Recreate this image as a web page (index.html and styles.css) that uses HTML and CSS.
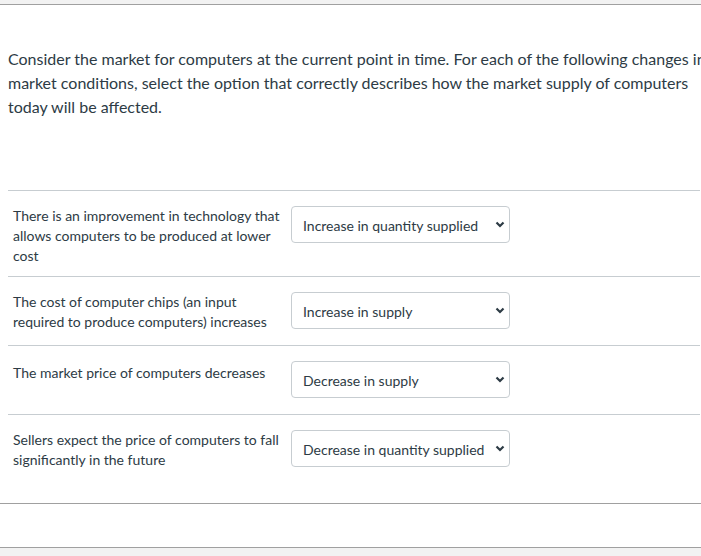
FILE: index.html
```html
<!DOCTYPE html>
<html lang="en">
<head>
    <meta charset="UTF-8">
    <meta name="viewport" content="width=device-width, initial-scale=1.0">
    <title>Market Supply of Computers</title>
    <link rel="stylesheet" href="styles.css">
</head>
<body>
    <div class="frame">
        <div class="question">
            <div class="question-text">
                <p class="intro">Consider the market for computers at the current point in time. For each of the following changes in market conditions, select the option that correctly describes how the market supply of computers today will be affected.</p>
            </div>

            <div class="answers">
                <div class="answer-row">
                    <div class="answer-label">There is an improvement in technology that allows computers to be produced at lower cost</div>
                    <div class="select-wrap">
                        <select class="answer-select">
                            <option selected>Increase in quantity supplied</option>
                            <option>Decrease in quantity supplied</option>
                            <option>Increase in supply</option>
                            <option>Decrease in supply</option>
                        </select>
                        <svg class="chevron" width="10" height="7" viewBox="0 0 10 7"><path d="M1.5 1.5 L5 5 L8.5 1.5" fill="none" stroke="#2d3b45" stroke-width="2.2"/></svg>
                    </div>
                </div>

                <div class="answer-row">
                    <div class="answer-label">The cost of computer chips (an input required to produce computers) increases</div>
                    <div class="select-wrap">
                        <select class="answer-select">
                            <option>Increase in quantity supplied</option>
                            <option>Decrease in quantity supplied</option>
                            <option selected>Increase in supply</option>
                            <option>Decrease in supply</option>
                        </select>
                        <svg class="chevron" width="10" height="7" viewBox="0 0 10 7"><path d="M1.5 1.5 L5 5 L8.5 1.5" fill="none" stroke="#2d3b45" stroke-width="2.2"/></svg>
                    </div>
                </div>

                <div class="answer-row">
                    <div class="answer-label label-single">The market price of computers decreases</div>
                    <div class="select-wrap">
                        <select class="answer-select">
                            <option>Increase in quantity supplied</option>
                            <option>Decrease in quantity supplied</option>
                            <option>Increase in supply</option>
                            <option selected>Decrease in supply</option>
                        </select>
                        <svg class="chevron" width="10" height="7" viewBox="0 0 10 7"><path d="M1.5 1.5 L5 5 L8.5 1.5" fill="none" stroke="#2d3b45" stroke-width="2.2"/></svg>
                    </div>
                </div>

                <div class="answer-row">
                    <div class="answer-label">Sellers expect the price of computers to fall significantly in the future</div>
                    <div class="select-wrap">
                        <select class="answer-select">
                            <option>Increase in quantity supplied</option>
                            <option selected>Decrease in quantity supplied</option>
                            <option>Increase in supply</option>
                            <option>Decrease in supply</option>
                        </select>
                        <svg class="chevron" width="10" height="7" viewBox="0 0 10 7"><path d="M1.5 1.5 L5 5 L8.5 1.5" fill="none" stroke="#2d3b45" stroke-width="2.2"/></svg>
                    </div>
                </div>
            </div>
        </div>

        <div class="question-footer"></div>
    </div>
</body>
</html>
```

FILE: styles.css
```css
:root {
    --text: #2d3b45;
    --rule: #c7cdd1;
    --frame-line: #a0a0a0;
    --frame-bg: #f2f2f2;
}

html, body {
    margin: 0;
    height: 100%;
    overflow: hidden;
}

body {
    font-family: Lato, 'Open Sans', sans-serif;
    color: var(--text);
    background-color: var(--frame-bg);
}

.frame {
    width: 100%;
    overflow: hidden;
    padding-top: 4px;
}

.question {
    width: 740px;
    background-color: white;
    border-top: 1px solid var(--frame-line);
    padding-bottom: 20px;
}

.question-text {
    padding: 42px 0 0 8px;
}

.intro {
    margin: 0;
    width: 715px;
    font-size: 16px;
    line-height: 24px;
}

.answers {
    margin: 71px 0 0 8px;
    width: 692px;
}

.answer-row {
    display: flex;
    align-items: flex-start;
    padding: 15px 0 0 5px;
    border-top: 1px solid var(--rule);
}

.answer-label {
    width: 270px;
    margin-right: 8px;
    padding-bottom: 10px;
    font-size: 14px;
    line-height: 20px;
}

.label-single {
    padding-top: 2px;
}

.select-wrap {
    position: relative;
    margin-bottom: 16px;
}

.answer-select {
    appearance: none;
    -webkit-appearance: none;
    width: 219px;
    height: 37px;
    padding: 1px 18px 0 11px;
    border: 1px solid var(--rule);
    border-radius: 4px;
    background-color: white;
    font-family: Lato, 'Open Sans', sans-serif;
    font-size: 14px;
    color: var(--text);
}

.chevron {
    position: absolute;
    right: 5px;
    top: 15px;
    pointer-events: none;
}

.question-footer {
    width: 740px;
    height: 43px;
    background-color: white;
    border-top: 1px solid var(--frame-line);
    border-bottom: 1px solid var(--frame-line);
}
```
